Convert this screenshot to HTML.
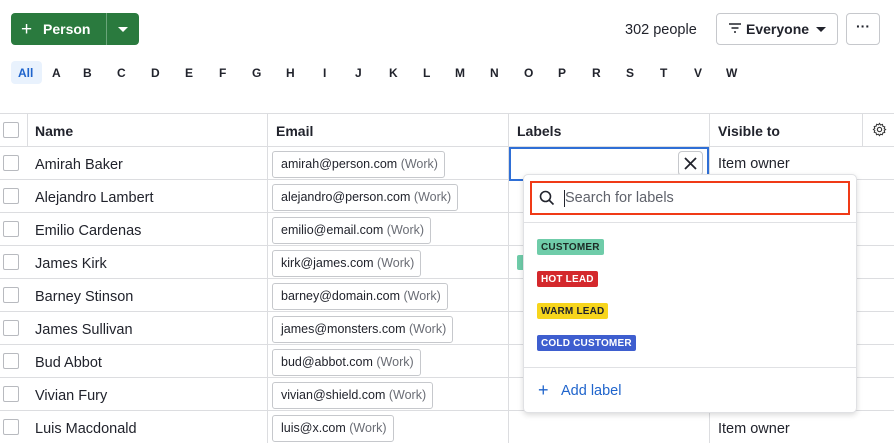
<!DOCTYPE html><html><head><style>
*{box-sizing:border-box;margin:0;padding:0}
body{width:894px;height:443px;overflow:hidden;background:#fff;font-family:"Liberation Sans",sans-serif;color:#21232c;position:relative}
.a{position:absolute}
.btn{border:1px solid #c6c8cc;border-radius:4px;background:#fff}
.hl{position:absolute;left:0;width:894px;height:1px;background:#dcdde0}
.vl{position:absolute;width:1px;background:#dcdde0}
.cb{position:absolute;left:3px;width:16px;height:16px;border:1.5px solid #b8babf;border-radius:2px;background:#fff}
.nm{position:absolute;left:35px;font-size:14.5px}
.em{position:absolute;left:272px;height:27px;border:1px solid #c6c8cc;border-radius:3px;font-size:12.5px;padding:5px 6px 0 8px;white-space:nowrap}
.em span{color:#6a6d75}
.lt{position:absolute;top:66px;font-size:12px;font-weight:bold}
.tag{position:absolute;left:537px;height:16px;border-radius:2px;font-size:10px;font-weight:bold;padding:3px 4px 0;letter-spacing:.2px}
</style></head><body>
<div class="a" style="left:11px;top:13px;width:128px;height:32px;background:#2a7a3e;border-radius:4px"></div>
<div class="a" style="left:106px;top:13px;width:1px;height:32px;background:#6aa57a"></div>
<div class="a" style="left:21px;top:19px;color:#fff;font-size:19px">+</div>
<div class="a" style="left:43px;top:21px;color:#fff;font-size:14px;font-weight:bold">Person</div>
<div class="a" style="left:118px;top:27px;border-left:5px solid transparent;border-right:5px solid transparent;border-top:5px solid #fff"></div>
<div class="a" style="left:625px;top:22px;font-size:14.5px">302 people</div>
<div class="a btn" style="left:716px;top:13px;width:122px;height:32px"></div>
<svg class="a" style="left:728px;top:22px" width="14" height="12"><path d="M1 2h12M3.5 6h7M6 10h2" stroke="#21232c" stroke-width="1.6"/></svg>
<div class="a" style="left:746px;top:21px;font-size:14px;font-weight:bold">Everyone</div>
<div class="a" style="left:816px;top:27px;border-left:5px solid transparent;border-right:5px solid transparent;border-top:5px solid #21232c"></div>
<div class="a btn" style="left:846px;top:13px;width:34px;height:32px;text-align:center;font-weight:bold;font-size:14px;line-height:24px">···</div>
<div class="a" style="left:11px;top:61px;width:31px;height:23px;background:#e9f2fd;border-radius:4px"></div>
<div class="lt" style="left:18px;color:#1f64cc">All</div>
<div class="lt" style="left:52px">A</div><div class="lt" style="left:83px">B</div><div class="lt" style="left:117px">C</div><div class="lt" style="left:151px">D</div><div class="lt" style="left:185px">E</div><div class="lt" style="left:219px">F</div><div class="lt" style="left:252px">G</div><div class="lt" style="left:286px">H</div><div class="lt" style="left:323px">I</div><div class="lt" style="left:355px">J</div><div class="lt" style="left:389px">K</div><div class="lt" style="left:423px">L</div><div class="lt" style="left:455px">M</div><div class="lt" style="left:490px">N</div><div class="lt" style="left:524px">O</div><div class="lt" style="left:558px">P</div><div class="lt" style="left:592px">R</div><div class="lt" style="left:626px">S</div><div class="lt" style="left:660px">T</div><div class="lt" style="left:694px">V</div><div class="lt" style="left:726px">W</div>
<div class="hl" style="top:113px"></div><div class="hl" style="top:146px"></div>
<div class="hl" style="top:179px"></div><div class="hl" style="top:212px"></div><div class="hl" style="top:245px"></div><div class="hl" style="top:278px"></div><div class="hl" style="top:311px"></div><div class="hl" style="top:344px"></div><div class="hl" style="top:377px"></div><div class="hl" style="top:410px"></div>
<div class="vl" style="left:27px;top:113px;height:34px"></div>
<div class="vl" style="left:267px;top:113px;height:330px"></div>
<div class="vl" style="left:508px;top:113px;height:330px"></div>
<div class="vl" style="left:709px;top:113px;height:330px"></div>
<div class="vl" style="left:862px;top:113px;height:34px"></div>
<div class="a" style="left:35px;top:123px;font-size:14px;font-weight:bold">Name</div>
<div class="a" style="left:276px;top:123px;font-size:14px;font-weight:bold">Email</div>
<div class="a" style="left:517px;top:123px;font-size:14px;font-weight:bold">Labels</div>
<div class="a" style="left:718px;top:123px;font-size:14px;font-weight:bold">Visible to</div>
<svg class="a" style="left:872px;top:122px" width="15" height="15" viewBox="0 0 16 16"><circle cx="8" cy="8" r="2.3" fill="none" stroke="#333" stroke-width="1.2"/><path d="M8 1.5l1.2 1.7 2-.6.4 2 2 .6-.6 2L14.5 8l-1.5 1.2.6 2-2 .4-.6 2-2-.6L8 14.5l-1.2-1.5-2 .6-.4-2-2-.6.6-2L1.5 8 3 6.8l-.6-2 2-.4.6-2 2 .6z" fill="none" stroke="#333" stroke-width="1.1"/></svg>
<div class="cb" style="top:122px"></div>
<div class="cb" style="top:155px"></div><div class="cb" style="top:188px"></div><div class="cb" style="top:221px"></div><div class="cb" style="top:254px"></div><div class="cb" style="top:287px"></div><div class="cb" style="top:320px"></div><div class="cb" style="top:353px"></div><div class="cb" style="top:386px"></div><div class="cb" style="top:419px"></div>
<div class="nm" style="top:157px">Amirah Baker</div>
<div class="nm" style="top:190px">Alejandro Lambert</div>
<div class="nm" style="top:223px">Emilio Cardenas</div>
<div class="nm" style="top:256px">James Kirk</div>
<div class="nm" style="top:289px">Barney Stinson</div>
<div class="nm" style="top:322px">James Sullivan</div>
<div class="nm" style="top:355px">Bud Abbot</div>
<div class="nm" style="top:388px">Vivian Fury</div>
<div class="nm" style="top:421px">Luis Macdonald</div>
<div class="em" style="top:151px">amirah@person.com <span>(Work)</span></div>
<div class="em" style="top:184px">alejandro@person.com <span>(Work)</span></div>
<div class="em" style="top:217px">emilio@email.com <span>(Work)</span></div>
<div class="em" style="top:250px">kirk@james.com <span>(Work)</span></div>
<div class="em" style="top:283px">barney@domain.com <span>(Work)</span></div>
<div class="em" style="top:316px">james@monsters.com <span>(Work)</span></div>
<div class="em" style="top:349px">bud@abbot.com <span>(Work)</span></div>
<div class="em" style="top:382px">vivian@shield.com <span>(Work)</span></div>
<div class="em" style="top:415px">luis@x.com <span>(Work)</span></div>
<div class="a" style="left:517px;top:255px;width:8px;height:15px;background:#6fcca9;border-radius:2px"></div>
<div class="a" style="left:718px;top:156px;font-size:14.5px">Item owner</div>
<div class="a" style="left:718px;top:421px;font-size:14.5px">Item owner</div>
<div class="a" style="left:509px;top:147px;width:200px;height:34px;border:2px solid #2f6fd6;background:#fff"></div>
<div class="a btn" style="left:678px;top:151px;width:25px;height:25px"></div>
<svg class="a" style="left:683px;top:156px" width="15" height="15"><path d="M2 2l11 11M13 2L2 13" stroke="#21232c" stroke-width="1.8"/></svg>
<div class="a" style="left:523px;top:174px;width:334px;height:239px;background:#fff;border:1px solid #e0e1e4;border-radius:5px;box-shadow:0 2px 6px rgba(0,0,0,.15)"></div>
<div class="a" style="left:530px;top:181px;width:320px;height:34px;border:2px solid #f03a17"></div>
<svg class="a" style="left:539px;top:190px" width="16" height="16"><circle cx="6.5" cy="6.5" r="5" fill="none" stroke="#21232c" stroke-width="1.6"/><path d="M10 10l4.5 4.5" stroke="#21232c" stroke-width="1.6"/></svg>
<div class="a" style="left:564px;top:190px;width:1px;height:17px;background:#21232c"></div>
<div class="a" style="left:565px;top:190px;font-size:14.5px;color:#5f626b">Search for labels</div>
<div class="a" style="left:524px;top:222px;width:332px;height:1px;background:#e0e1e4"></div>
<div class="tag" style="top:239px;background:#6fcca9;color:#1c2b25">CUSTOMER</div>
<div class="tag" style="top:271px;background:#d4282c;color:#fff">HOT LEAD</div>
<div class="tag" style="top:303px;background:#f7d51c;color:#21232c">WARM LEAD</div>
<div class="tag" style="top:335px;background:#3e5ecf;color:#fff">COLD CUSTOMER</div>
<div class="a" style="left:524px;top:367px;width:332px;height:1px;background:#e0e1e4"></div>
<div class="a" style="left:538px;top:380px;font-size:18px;color:#1f64cc">+</div>
<div class="a" style="left:561px;top:383px;font-size:14.5px;color:#1f64cc">Add label</div>
</body></html>
